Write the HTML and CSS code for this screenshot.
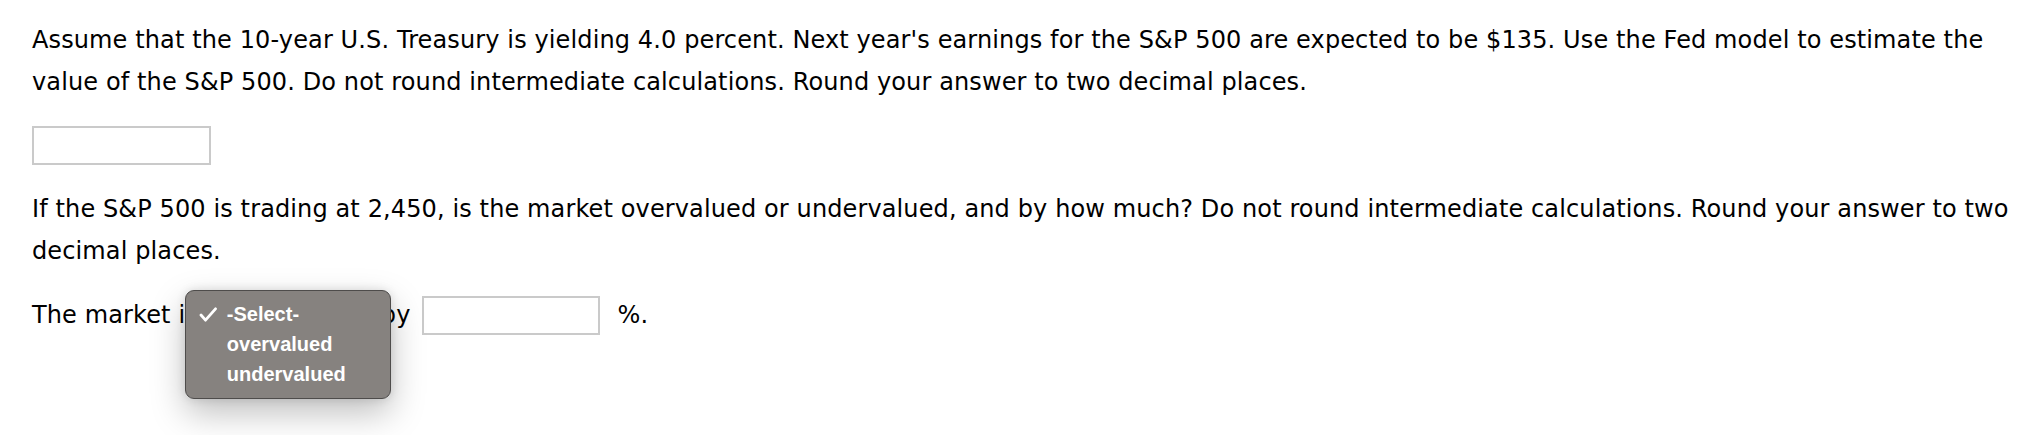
FILE: index.html
```html
<!DOCTYPE html>
<html>
<head>
<meta charset="utf-8">
<link rel="stylesheet" href="styles.css">
</head>
<body>
<div class="question">
  <p class="para">Assume that the 10-year U.S. Treasury is yielding 4.0 percent. Next year's earnings for the S&amp;P 500 are expected to be $135. Use the Fed model to estimate the value of the S&amp;P 500. Do not round intermediate calculations. Round your answer to two decimal places.</p>
  <div class="answer-row"><span class="field"></span></div>
  <p class="para">If the S&amp;P 500 is trading at 2,450, is the market overvalued or undervalued, and by how much? Do not round intermediate calculations. Round your answer to two decimal places.</p>
  <div class="market-row">
    <span class="text">The market is</span>
    <span class="select-wrap">
      <span class="select"></span>
      <div class="menu">
        <div class="item checked"><svg class="check" viewBox="0 0 18 15" width="18" height="15"><path d="M2 8 L6.5 13.2 L16.5 1.8" fill="none" stroke="#fff" stroke-width="2.8" stroke-linecap="round" stroke-linejoin="round"/></svg>-Select-</div>
        <div class="item">overvalued</div>
        <div class="item">undervalued</div>
      </div>
    </span>
    <span class="text by">by</span>
    <span class="field small"></span>
    <span class="text pct">%.</span>
  </div>
</div>
</body>
</html>
```
FILE: styles.css
```css
html, body {
  margin: 0;
  padding: 0;
  background: #fff;
}
body {
  min-height: 435px;
}
.question {
  padding: 19px 20px 0 32px;
  font-family: "DejaVu Sans", Verdana, sans-serif;
  font-size: 24px;
  letter-spacing: 0.12px;
  line-height: 42px;
  color: #000;
}
.para {
  margin: 0;
}
.answer-row {
  display: flex;
  padding: 23px 0 23px 0;
}
.field {
  display: inline-block;
  width: 175px;
  height: 35px;
  border: 2px solid #cacaca;
  background: #fff;
}
.market-row {
  display: flex;
  align-items: center;
  margin-top: 22px;
  height: 42px;
}
.select-wrap {
  position: relative;
  display: inline-block;
  width: 171px;
  height: 38px;
  margin-left: 6px;
}
.select {
  display: block;
  width: 100%;
  height: 100%;
}
.menu {
  position: absolute;
  left: -19px;
  top: -6px;
  width: 204px;
  padding: 8px 0 9px 0;
  background: #86827f;
  border: 1px solid #4e4c4b;
  border-radius: 9px;
  box-shadow: 0 14px 34px rgba(0,0,0,0.25), 0 0 10px rgba(0,0,0,0.12);
  font-family: "Liberation Sans", Arial, sans-serif;
  font-weight: 700;
  font-size: 20px;
  letter-spacing: 0;
  line-height: 30px;
  color: #fff;
  z-index: 2;
}
.item {
  position: relative;
  padding-left: 41px;
}
.check {
  position: absolute;
  left: 13px;
  top: 8px;
}
.by {
  margin-left: 6px;
}
.field.small {
  margin-left: 11px;
  width: 174px;
}
.pct {
  margin-left: 18px;
}
```
